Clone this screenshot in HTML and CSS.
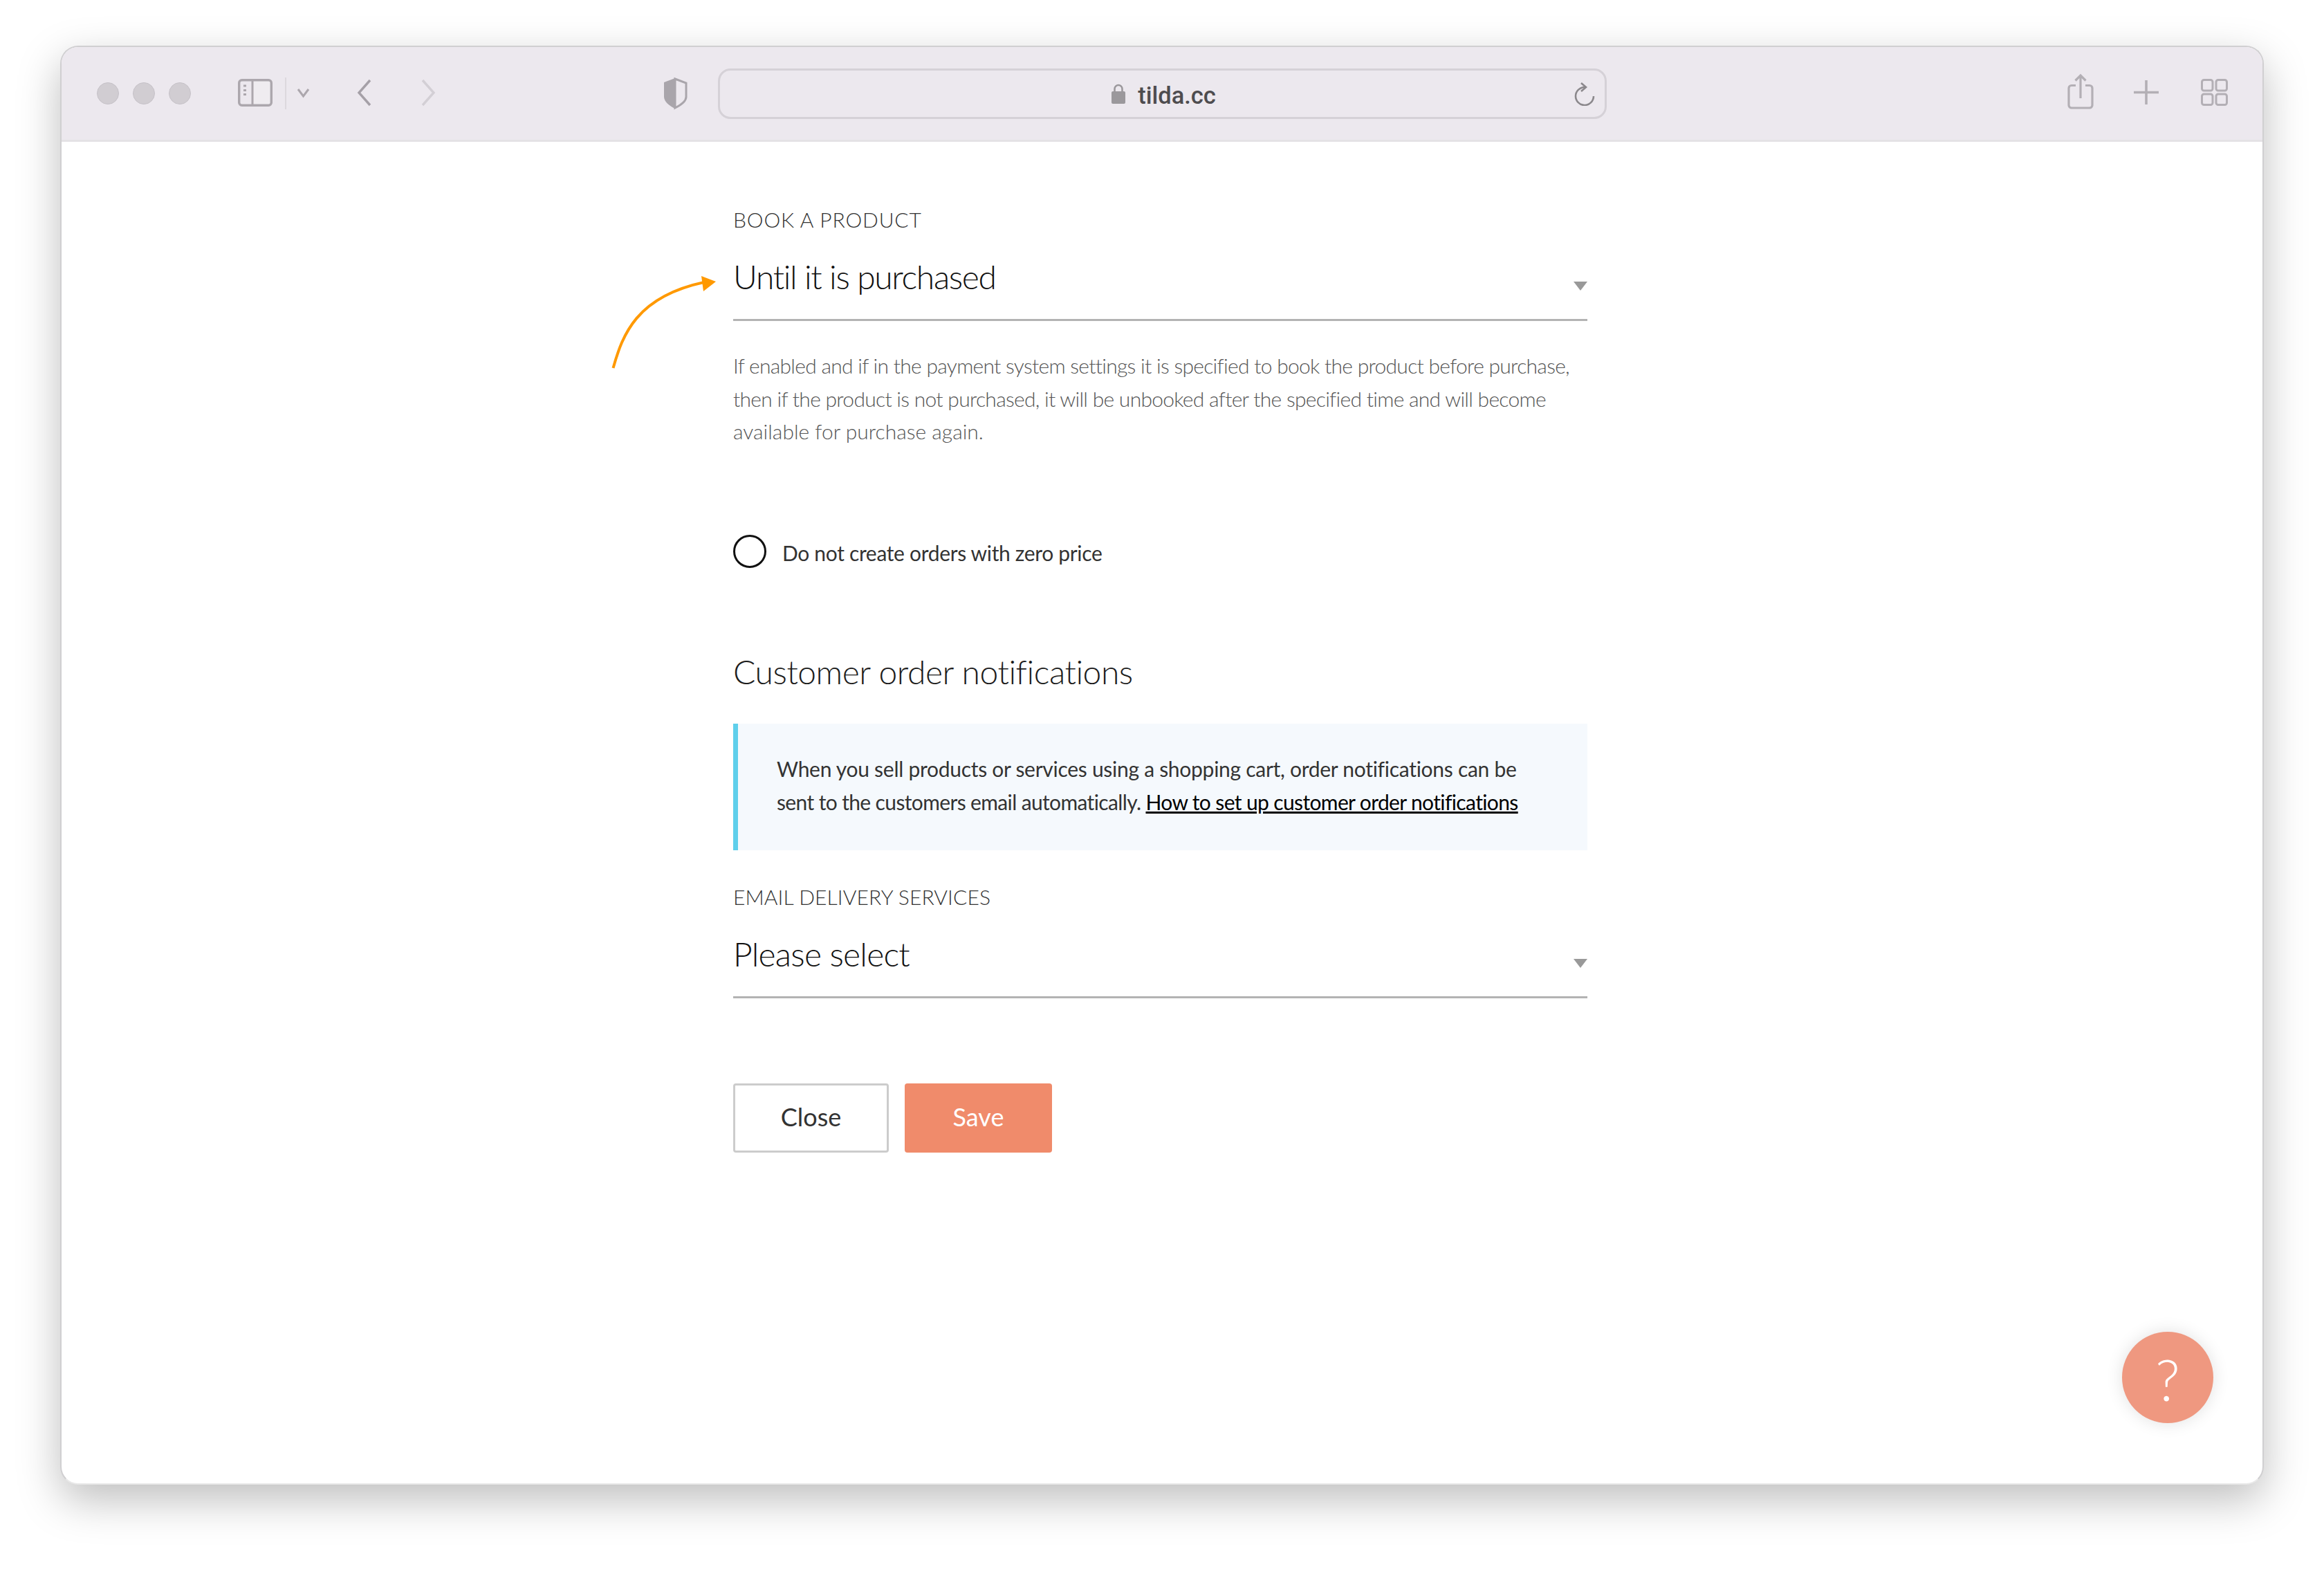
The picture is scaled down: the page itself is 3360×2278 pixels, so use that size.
FILE: index.html
```html
<!DOCTYPE html>
<html lang="en">
<head>
<meta charset="utf-8">
<title>tilda.cc</title>
<link rel="stylesheet" href="styles.css">
</head>
<body>
<div class="window">
  <header class="toolbar">
    <div class="lights"><span class="light"></span><span class="light"></span><span class="light"></span></div>
    <svg class="ic ic-sidebar" width="50" height="60" viewBox="0 0 50 60"><rect x="20" y="10" width="28" height="37" fill="#efecf0"/><rect x="1.7" y="10.7" width="46.6" height="36.6" rx="4" fill="none" stroke="#aca7ad" stroke-width="3.4"/><path d="M21 10v37" stroke="#aca7ad" stroke-width="3"/><path d="M8 19h4M8 25.500h4M8 31.500h4" stroke="#aca7ad" stroke-width="3"/></svg>
    <span class="divider"></span>
    <svg class="ic ic-caret" width="19" height="60" viewBox="0 0 19 60"><path d="M2 24l7.500 10L17 24" fill="none" stroke="#aca7ad" stroke-width="3"/></svg>
    <svg class="ic ic-back" width="21" height="60" viewBox="0 0 21 60"><path d="M19 11L3 29l16 18" fill="none" stroke="#a5a0a7" stroke-width="3.400"/></svg>
    <svg class="ic ic-forward" width="21" height="60" viewBox="0 0 21 60"><path d="M2 11l16 18L2 47" fill="none" stroke="#d3cfd5" stroke-width="3.400"/></svg>
    <svg class="ic ic-shield" width="36" height="60" viewBox="0 0 36 60"><path d="M18 9L34 15V35C34 42 26 47 18 51V9Z" fill="none" stroke="#a9a5ab" stroke-width="3"/><path d="M18 8L2 14V35C2 42 10 48 18 52Z" fill="#a9a5ab"/></svg>
    <div class="url">
      <div class="url-text">
        <svg class="lock" width="20" height="30" viewBox="0 0 20 30"><path d="M4.500 13V8.500a5.500 5.500 0 0 1 11 0V13" fill="none" stroke="#9b989c" stroke-width="2.600"/><rect x="0" y="12" width="20" height="18" rx="2" fill="#9b989c"/></svg>
        <span class="domain">tilda.cc</span>
      </div>
      <svg class="reload" width="30" height="34" viewBox="0 0 30 34"><path d="M15 7A13 13 0 1 0 28 20" fill="none" stroke="#8b888c" stroke-width="2.600"/><path d="M10 1l7 6-7 6" fill="none" stroke="#8b888c" stroke-width="2.600"/></svg>
    </div>
    <svg class="ic ic-share" width="38" height="60" viewBox="0 0 38 60"><path d="M12 18.500H6a4 4 0 0 0-4 4V47a4 4 0 0 0 4 4H32a4 4 0 0 0 4-4V22.500a4 4 0 0 0-4-4H26" fill="none" stroke="#b3afb5" stroke-width="3.200"/><path d="M19 37V5M11.500 11.500L19 4l7.500 7.500" fill="none" stroke="#b3afb5" stroke-width="3.200"/></svg>
    <svg class="ic ic-plus" width="36" height="60" viewBox="0 0 36 60"><path d="M18 11V46M0 28.500H36" fill="none" stroke="#b3afb5" stroke-width="3.600"/></svg>
    <svg class="ic ic-grid" width="39" height="60" viewBox="0 0 39 60"><g fill="none" stroke="#b3afb5" stroke-width="3"><rect x="1.500" y="10.500" width="15.500" height="15.500" rx="3"/><rect x="22" y="10.500" width="15.500" height="15.500" rx="3"/><rect x="1.500" y="31" width="15.500" height="15.500" rx="3"/><rect x="22" y="31" width="15.500" height="15.500" rx="3"/></g></svg>
  </header>
  <main class="page">
    <div class="form">
      <svg class="note-arrow" width="160" height="145" viewBox="0 0 160 145"><path d="M6.500 138C20 90 40 35 138 14" fill="none" stroke="#ff9900" stroke-width="4"/><path d="M134 5L155 13L137 27Z" fill="#ff9900"/></svg>
      <div class="label label-first">BOOK A PRODUCT</div>
      <div class="select"><span class="select-value">Until it is purchased</span><span class="select-caret"></span></div>
      <p class="hint">If enabled and if in the payment system settings it is specified to book the product before purchase,<br>then if the product is not purchased, it will be unbooked after the specified time and will become<br><span class="hint-last">available for purchase again.</span></p>
      <div class="check-row"><span class="check"></span><span class="check-text">Do not create orders with zero price</span></div>
      <h2 class="heading">Customer order notifications</h2>
      <div class="info"><span class="info-top">When you sell products or services using a shopping cart, order notifications can be</span><br><span class="info-bottom">sent to the customers email automatically. <a class="info-link" href="#">How to set up customer order notifications</a></span></div>
      <div class="label label-second">EMAIL DELIVERY SERVICES</div>
      <div class="select"><span class="select-value select-value-alt">Please select</span><span class="select-caret"></span></div>
      <div class="buttons"><button class="btn btn-close">Close</button><button class="btn btn-save">Save</button></div>
    </div>
    <button class="help">?</button>
  </main>
</div>
</body>
</html>
```
FILE: styles.css
```css
* { box-sizing: border-box; }
html, body { margin: 0; background: #fff; }
body {
  width: 3360px;
  height: 2278px;
  padding: 66px 87px 132px;
  font-family: "Lato", "Liberation Sans", sans-serif;
  overflow: hidden;
}
.window {
  height: 2080px;
  display: flex;
  flex-direction: column;
  background: #fff;
  border: 2px solid #d0cfd1;
  border-bottom-color: #e8e8e8;
  border-radius: 26px;
  box-shadow: 0 22px 62px rgba(0,0,0,.26);
}
.toolbar {
  height: 137px;
  flex: none;
  display: flex;
  align-items: center;
  background: #ece8ee;
  border-bottom: 3px solid #e4e2e5;
  border-radius: 24px 24px 0 0;
  padding-left: 51px;
}
.ic { display: block; flex: none; }
.lights { display: flex; gap: 20px; }
.light {
  width: 32px;
  height: 32px;
  border-radius: 50%;
  background: #d1cdd2;
  border: 1px solid #c6c2c8;
}
.ic-sidebar { margin-left: 68px; }
.divider { width: 2px; height: 46px; margin-left: 18px; background: #dcd8dd; }
.ic-caret { margin-left: 15px; }
.ic-back { margin-left: 68px; }
.ic-forward { margin-left: 72px; }
.ic-shield { margin-left: 328px; }
.url {
  position: relative;
  width: 1285px;
  height: 73px;
  margin-left: 44px;
  display: flex;
  align-items: center;
  justify-content: center;
  border: 3px solid #d5d1d7;
  border-radius: 18px;
}
.url-text { display: flex; align-items: center; gap: 18px; padding-left: 4px; }
.lock { display: block; }
.domain {
  font-family: "Roboto", "Liberation Sans", sans-serif;
  font-size: 34.500px;
  font-weight: 500;
  line-height: 40px;
  color: #4e4c4f;
  position: relative;
  top: 3px;
}
.reload { position: absolute; right: 14px; top: 17px; }
.ic-share { margin-left: 666px; }
.ic-plus { margin-left: 58px; }
.ic-grid { margin-left: 61px; }

.page { position: relative; flex: 1; }
.form {
  position: relative;
  width: 1235px;
  margin-left: 971px;
  padding-top: 92px;
}
.note-arrow { position: absolute; left: -180px; top: 189px; }
.label {
  font-size: 30px;
  font-weight: 300;
  line-height: 40px;
  color: #333;
}
.label-first { letter-spacing: .84px; }
.label-second { margin-top: 47px; letter-spacing: .1px; }
.select {
  display: flex;
  justify-content: space-between;
  align-items: flex-start;
  margin-top: 33px;
  padding-bottom: 31px;
  border-bottom: 3px solid #b3b3b3;
}
.select-value {
  font-size: 48px;
  font-weight: 300;
  line-height: 60px;
  color: #111;
  letter-spacing: -1.35px;
}
.select-value-alt { letter-spacing: -.77px; }
.select-caret {
  width: 0;
  height: 0;
  margin-top: 37px;
  border-left: 10.5px solid transparent;
  border-right: 10.5px solid transparent;
  border-top: 13px solid #999;
}
.hint {
  margin: 41px 0 0;
  font-size: 30px;
  font-weight: 300;
  line-height: 47.500px;
  letter-spacing: -.72px;
  color: #555;
  white-space: nowrap;
}
.hint-last { letter-spacing: 0; }
.check-row { display: flex; align-items: center; gap: 23px; margin-top: 125px; height: 48px; }
.check { width: 48px; height: 48px; flex: none; border: 3px solid #111; border-radius: 50%; }
.check-text { padding-top: 4px; font-size: 30px; font-weight: 400; line-height: 40px; letter-spacing: -.33px; color: #333; }
.heading {
  margin: 120px 0 0;
  font-size: 48px;
  font-weight: 300;
  line-height: 60px;
  letter-spacing: -.46px;
  color: #1c1c1c;
}
.info {
  height: 183px;
  margin-top: 45px;
  padding: 41px 0 0 56px;
  background: #f5f9fd;
  border-left: 7px solid #5fcfeb;
  font-size: 30px;
  line-height: 48px;
  color: #333;
  white-space: nowrap;
}
.info-top { letter-spacing: -.28px; }
.info-bottom { letter-spacing: -.63px; }
.info-link { color: #000; text-decoration: underline; text-decoration-thickness: 3px; }
.buttons { display: flex; gap: 23px; margin-top: 123px; }
.btn {
  height: 100px;
  font-family: inherit;
  font-size: 36px;
  line-height: 40px;
  border-radius: 4px;
  padding: 0 0 4px;
}
.btn-close { width: 225px; background: #fff; border: 3px solid #ccc; color: #333; }
.btn-save { width: 213px; background: #f08b6b; border: 0; color: #fff; }
.help {
  position: absolute;
  right: 71px;
  bottom: 87px;
  width: 132px;
  height: 132px;
  padding: 4px 0 0;
  border: 0;
  border-radius: 50%;
  background: #ef9880;
  box-shadow: 0 0 24px rgba(0,0,0,.12);
  color: #fff;
  font-family: inherit;
  font-size: 82px;
  font-weight: 300;
  line-height: 128px;
}
```
